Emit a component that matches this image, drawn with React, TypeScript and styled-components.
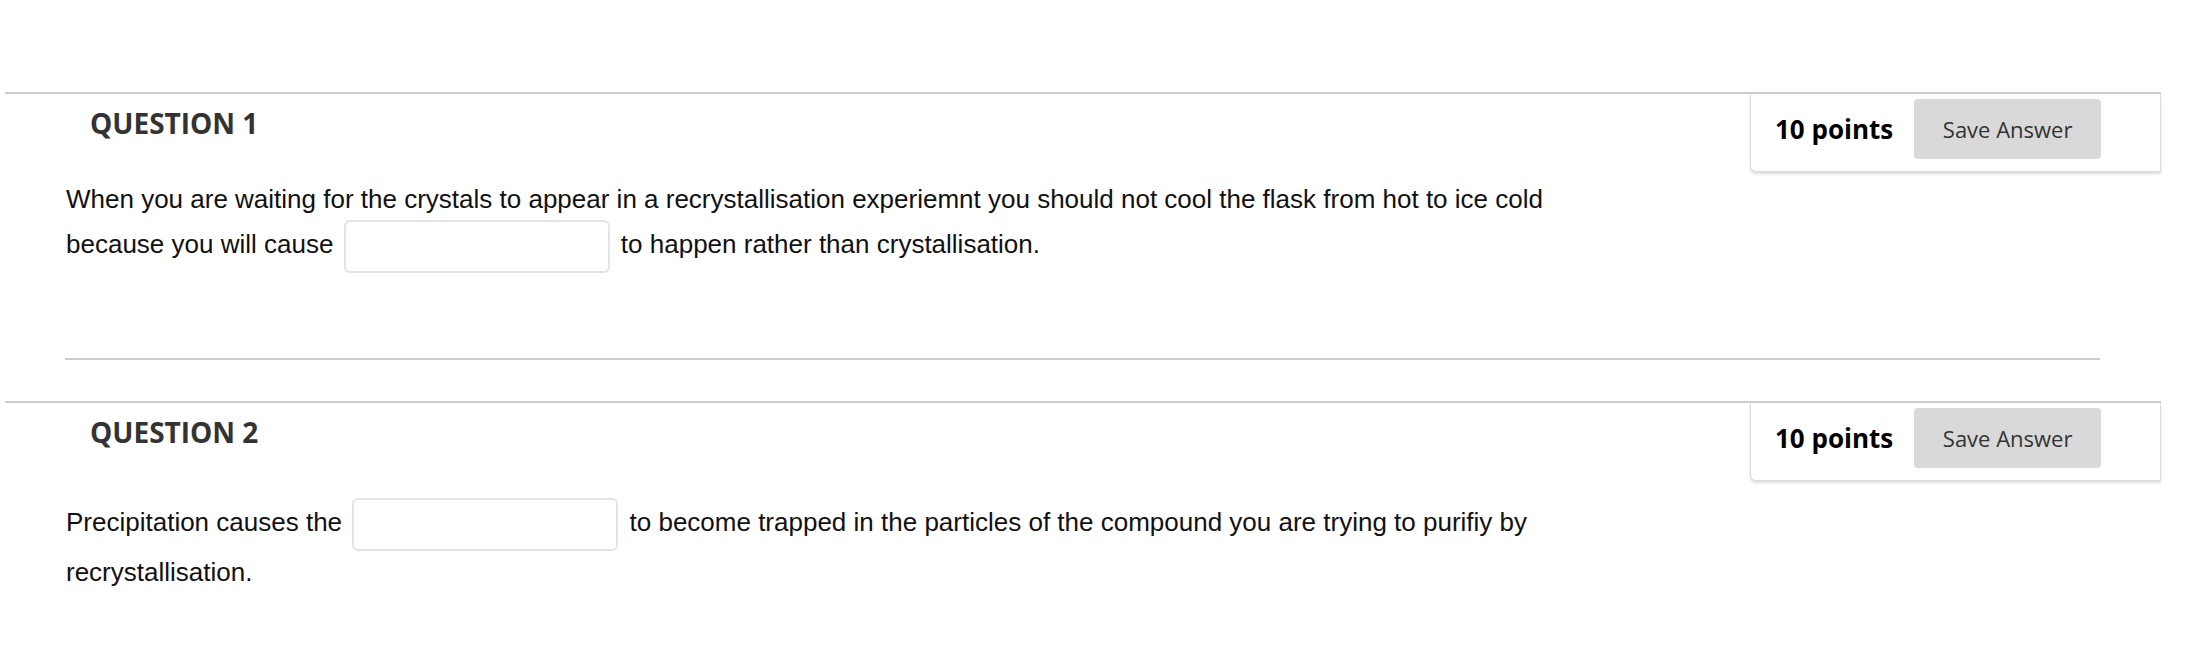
import styled, { createGlobalStyle } from "styled-components";

const questions = [
  {
    number: 1,
    points: 10,
    top: 6,
    before: "When you are waiting for the crystals to appear in a recrystallisation experiemnt you should not cool the flask from hot to ice cold because you will cause",
    after: "to happen rather than crystallisation.",
  },
  {
    number: 2,
    points: 10,
    top: 17,
    before: "Precipitation causes the",
    after: "to become trapped in the particles of the compound you are trying to purifiy by recrystallisation.",
  },
];

export default function App() {
  return (
    <>
      <GlobalStyle />
      <Page>
        {questions.map((q, i) => (
          <div key={q.number}>
            {i > 0 && <Divider />}
            <QuestionHeader>
              <QuestionTitle>QUESTION {q.number}</QuestionTitle>
              <PointsCard>
                <Points>{q.points} points</Points>
                <SaveButton type="button">Save Answer</SaveButton>
              </PointsCard>
            </QuestionHeader>
            <QuestionBody $top={q.top}>
              {q.before} <BlankInput type="text" /> {q.after}
            </QuestionBody>
          </div>
        ))}
      </Page>
    </>
  );
}

const GlobalStyle = createGlobalStyle`
  body {
    margin: 0;
    background: #fff;
    font-family: "Liberation Sans", Arial, sans-serif;
  }
`;

const Page = styled.main`
  box-sizing: border-box;
  width: 2161px;
  padding: 92px 0 40px 5px;
`;

const QuestionHeader = styled.div`
  display: flex;
  justify-content: space-between;
  align-items: flex-start;
  border-top: 2px solid #cccccc;
`;

const QuestionTitle = styled.h3`
  margin: 0 0 0 85px;
  padding-top: 10px;
  font-family: "Open Sans", sans-serif;
  font-size: 28px;
  font-weight: 700;
  color: #333;
`;

const PointsCard = styled.div`
  box-sizing: border-box;
  width: 411px;
  display: flex;
  align-items: center;
  gap: 21px;
  padding: 5px 59px 12px 24px;
  border: 1px solid #dcdcdc;
  border-top: none;
  border-radius: 0 0 0 6px;
  box-shadow: 0 2px 3px rgba(0, 0, 0, 0.14);
`;

const Points = styled.span`
  font-family: "Open Sans", sans-serif;
  font-size: 26px;
  font-weight: 700;
  color: #000;
  white-space: nowrap;
`;

const SaveButton = styled.button`
  width: 187px;
  height: 60px;
  border: none;
  border-radius: 4px;
  background: #d9d9d9;
  font-family: "Open Sans", sans-serif;
  font-size: 22px;
  color: #333;
  cursor: pointer;
`;

const QuestionBody = styled.p<{ $top: number }>`
  max-width: 1525px;
  margin: ${(p) => p.$top}px 0 0 61px;
  font-family: "Liberation Sans", Arial, sans-serif;
  font-size: 26px;
  line-height: 42px;
  color: #111;
`;

const BlankInput = styled.input`
  box-sizing: border-box;
  width: 266px;
  height: 53px;
  margin: 0 4px 0 3px;
  vertical-align: middle;
  border: 2px solid #e4e4e4;
  border-radius: 6px;
  background: #fff;
  font-size: 22px;
`;

const Divider = styled.hr`
  width: 2035px;
  height: 2px;
  margin: 85px 0 41px 60px;
  border: none;
  background: #cccccc;
`;
